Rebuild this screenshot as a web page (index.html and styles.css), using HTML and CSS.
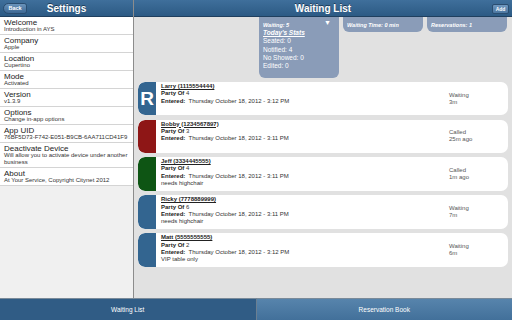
FILE: index.html
```html
<!DOCTYPE html>
<html>
<head>
    <title>Waiting List</title>
    <link rel="stylesheet" href="styles.css">
</head>
<body>
    <div class="app">
        <!-- Settings pane -->
        <div class="sidebar">
            <div class="bar">
                <span class="back-btn">Back</span>
                <span class="bar-title">Settings</span>
            </div>
            <ul class="settings">
                <li><div class="item-title">Welcome</div><div class="item-sub">Introduction in AYS</div></li>
                <li><div class="item-title">Company</div><div class="item-sub">Apple</div></li>
                <li><div class="item-title">Location</div><div class="item-sub">Cupertino</div></li>
                <li><div class="item-title">Mode</div><div class="item-sub">Activated</div></li>
                <li><div class="item-title">Version</div><div class="item-sub">v1.3.9</div></li>
                <li><div class="item-title">Options</div><div class="item-sub">Change in-app options</div></li>
                <li><div class="item-title">App UID</div><div class="item-sub">76BF5D73-F742-E051-B9CB-6AA711CD41F9</div></li>
                <li><div class="item-title">Deactivate Device</div><div class="item-sub">Will allow you to activate device under another business</div></li>
                <li><div class="item-title">About</div><div class="item-sub">At Your Service, Copyright Citynet 2012</div></li>
            </ul>
        </div>

        <!-- Waiting list pane -->
        <div class="main">
            <div class="bar main-bar">
                <span class="bar-title">Waiting List</span>
                <span class="add-btn">Add</span>
            </div>
            <div class="stats">
                <div class="stat stat-big">
                    <span class="arrow">&#9660;</span>
                    <div class="stat-head">Waiting: 5</div>
                    <div class="stat-head stat-link">Today's Stats</div>
                    <div>Seated: 0</div>
                    <div>Notified: 4</div>
                    <div>No Showed: 0</div>
                    <div>Edited: 0</div>
                </div>
                <div class="stat"><div class="stat-head">Waiting Time: 0 min</div></div>
                <div class="stat"><div class="stat-head">Reservations: 1</div></div>
            </div>

            <div class="list">
                <div class="card">
                    <div class="tag tag-blue">R</div>
                    <div class="info">
                        <div class="name">Larry (1115554444)</div>
                        <div><b>Party Of</b> 4</div>
                        <div><b>Entered:</b>&nbsp; Thursday October 18, 2012 - 3:12 PM</div>
                    </div>
                    <div class="status">Waiting<br>3m</div>
                </div>
                <div class="card">
                    <div class="tag tag-red"></div>
                    <div class="info">
                        <div class="name">Bobby (1234567897)</div>
                        <div><b>Party Of</b> 3</div>
                        <div><b>Entered:</b>&nbsp; Thursday October 18, 2012 - 3:11 PM</div>
                    </div>
                    <div class="status">Called<br>25m ago</div>
                </div>
                <div class="card">
                    <div class="tag tag-green"></div>
                    <div class="info">
                        <div class="name">Jeff (3334445555)</div>
                        <div><b>Party Of</b> 4</div>
                        <div><b>Entered:</b>&nbsp; Thursday October 18, 2012 - 3:11 PM</div>
                        <div>needs highchair</div>
                    </div>
                    <div class="status">Called<br>1m ago</div>
                </div>
                <div class="card">
                    <div class="tag tag-blue"></div>
                    <div class="info">
                        <div class="name">Ricky (7778889999)</div>
                        <div><b>Party Of</b> 6</div>
                        <div><b>Entered:</b>&nbsp; Thursday October 18, 2012 - 3:11 PM</div>
                        <div>needs highchair</div>
                    </div>
                    <div class="status">Waiting<br>7m</div>
                </div>
                <div class="card">
                    <div class="tag tag-blue"></div>
                    <div class="info">
                        <div class="name">Matt (5555555555)</div>
                        <div><b>Party Of</b> 2</div>
                        <div><b>Entered:</b>&nbsp; Thursday October 18, 2012 - 3:12 PM</div>
                        <div>VIP table only</div>
                    </div>
                    <div class="status">Waiting<br>6m</div>
                </div>
            </div>
        </div>
    </div>

    <!-- Tabs -->
    <div class="tabs">
        <div class="tab tab-active">Waiting List</div>
        <div class="tab">Reservation Book</div>
    </div>
</body>
</html>
```

FILE: styles.css
```css
body {
    font-family: 'Liberation Sans', Arial, sans-serif;
    margin: 0;
    width: 512px;
    height: 320px;
    overflow: hidden;
    display: flex;
    flex-direction: column;
    color: #222;
}

.app {
    display: flex;
    height: 298px;
}

/* top bars */
.bar {
    height: 17px;
    box-sizing: border-box;
    background: linear-gradient(#3f6f9b, #2c5a84);
    border-bottom: 1px solid #1f3f5e;
    display: flex;
    align-items: center;
    justify-content: center;
    position: relative;
    color: #fff;
}

.bar-title {
    font-weight: bold;
    font-size: 10px;
    text-shadow: 0 -1px 0 #1c3a56;
}

.back-btn {
    position: absolute;
    left: 3px;
    top: 3px;
    width: 24px;
    height: 11px;
    box-sizing: border-box;
    border-radius: 6px 3px 3px 6px;
    background: linear-gradient(#6a93bb, #3d6893);
    border: 1px solid #2a4d70;
    font-size: 5.5px;
    font-weight: bold;
    line-height: 9px;
    text-align: center;
}

.add-btn {
    position: absolute;
    right: 3px;
    top: 4px;
    width: 17px;
    height: 10px;
    box-sizing: border-box;
    border-radius: 2px;
    background: linear-gradient(#7098bf, #4b76a0);
    border: 1px solid #2a4d70;
    font-size: 5px;
    font-weight: bold;
    line-height: 8px;
    text-align: center;
}

/* settings */
.sidebar {
    width: 133px;
    flex-shrink: 0;
    background-color: #f0f0f0;
    border-right: 1px solid #8c8c8c;
}

.settings {
    list-style: none;
    margin: 0;
    padding: 0;
}

.settings li {
    background-color: #fff;
    border-bottom: 1px solid #d4d4d4;
    padding: 2px 4px 1px 4px;
}

.item-title {
    font-size: 8px;
    line-height: 7px;
    color: #222;
}

.item-sub {
    font-size: 6px;
    line-height: 7px;
    color: #333;
}

/* waiting list */
.main {
    flex: 1;
    background-color: #e1e1e1;
    display: flex;
    flex-direction: column;
}

.stats {
    display: flex;
    justify-content: flex-end;
    align-items: flex-start;
    gap: 4px;
    padding-right: 5px;
}

.stat {
    width: 80px;
    height: 15px;
    box-sizing: border-box;
    background-color: #8a9cb8;
    border-radius: 0 0 6px 6px;
    padding: 4px 4px 0 4px;
    color: #fff;
    font-size: 6.5px;
    line-height: 8.2px;
}

.stat-big {
    height: 61px;
    position: relative;
}

.stat-head {
    font-weight: bold;
    font-style: italic;
    font-size: 5.5px;
}

.stat-link {
    font-size: 6.5px;
    text-decoration: underline;
}

.arrow {
    position: absolute;
    right: 8px;
    top: 2px;
    font-size: 7px;
}

.list {
    display: flex;
    flex-direction: column;
    gap: 4.5px;
    padding: 4px 4px 0 4px;
}

.card {
    display: flex;
    align-items: center;
    background-color: #fff;
    border-radius: 7px;
    min-height: 33px;
    overflow: hidden;
}

.tag {
    width: 18px;
    align-self: stretch;
    flex-shrink: 0;
    border-radius: 7px 0 0 7px;
    color: #fff;
    font-weight: bold;
    font-size: 19px;
    display: flex;
    align-items: center;
    justify-content: center;
}

.tag-blue { background-color: #336590; }
.tag-red { background-color: #8e1616; }
.tag-green { background-color: #0e5514; }

.info {
    flex: 1;
    align-self: flex-start;
    padding: 1px 0 3px 5px;
    font-size: 6px;
    line-height: 7.4px;
    color: #333;
}

.info b {
    color: #222;
}

.name {
    font-weight: bold;
    text-decoration: underline;
    color: #222;
}

.status {
    width: 59px;
    font-size: 6px;
    line-height: 7px;
    color: #555;
}

/* bottom tabs */
.tabs {
    display: flex;
    height: 22px;
}

.tab {
    flex: 1;
    background: linear-gradient(#5784ac, #42709a);
    color: #fff;
    font-size: 6.5px;
    display: flex;
    align-items: center;
    justify-content: center;
    border-top: 1px solid #7a8a99;
    border-left: 1px solid #6a7f92;
}

.tab-active {
    background: #305c85;
    border-left: none;
}
```
